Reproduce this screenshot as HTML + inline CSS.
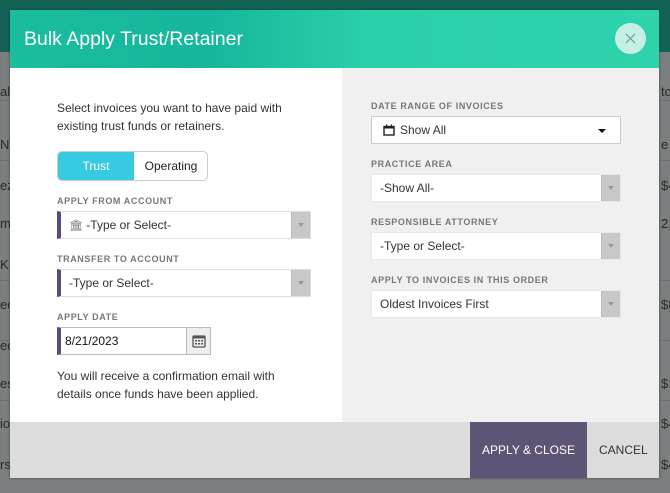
<!DOCTYPE html>
<html><head><style>
*{box-sizing:border-box;margin:0;padding:0}
body{width:670px;height:493px;overflow:hidden;background:#7b7e7f;font-family:"Liberation Sans",sans-serif;position:relative}
.bgtop{position:absolute;left:0;top:0;width:670px;height:52px;background:#136355}
.bgrow{position:absolute;left:0;width:670px;height:1px;background:#6d7071}
.bgt{position:absolute;font-size:13px;color:#2a2a2a}
.modal{position:absolute;left:10px;top:10px;width:649px;height:468px;background:#fff;overflow:hidden;box-shadow:0 0 3px rgba(0,0,0,.4)}
.hdr{position:absolute;left:0;top:0;width:649px;height:58px;background:linear-gradient(90deg,#1bbd9e 0%,#15b69c 30%,#2ad0a8 55%,#2ed3ab 100%)}
.hdr h1{position:absolute;left:14px;top:18px;font-weight:normal;font-size:19.5px;color:#fff}
.close{position:absolute;left:605px;top:13px;width:31px;height:31px;border-radius:50%;background:#c4efe2}
.right{position:absolute;left:332px;top:58px;width:317px;height:354px;background:#f0f0f0}
.footer{position:absolute;left:0;top:412px;width:649px;height:56px;background:#dcdcdc}
.apply{position:absolute;left:460px;top:0;width:117px;height:56px;background:#5e5475;color:#fff;font-size:12px;text-align:center;line-height:57px}
.cancel{position:absolute;left:589px;top:0;font-size:12px;color:#333;line-height:57px}
.txt{position:absolute;font-size:12px;color:#333;line-height:18px}
.lbl{position:absolute;font-size:9px;font-weight:bold;letter-spacing:0.6px;color:#777}
.sel{position:absolute;height:28px;background:#fff;border:1px solid #ddd;font-size:12px;color:#333;line-height:26px;padding-left:8px}
.sel.bar{border-left:4px solid #5a4a7d}
.arr{position:absolute;right:0;top:0;width:19px;height:26px;background:#c8c8c8;border-left:1px solid #bbb}
.arr:after{content:"";position:absolute;left:6px;top:11px;border:3.5px solid transparent;border-top:4px solid #999}
</style></head><body>
<div class="bgtop"></div>
<div class="bgrow" style="top:100px"></div><div class="bgrow" style="top:160px"></div><div class="bgrow" style="top:220px"></div><div class="bgrow" style="top:280px"></div><div class="bgrow" style="top:340px"></div><div class="bgrow" style="top:400px"></div>
<div class="bgt" style="left:0;top:84px">al</div><div class="bgt" style="left:0;top:137px">Na</div><div class="bgt" style="left:0;top:178px">ez</div><div class="bgt" style="left:0;top:216px">m</div><div class="bgt" style="left:0;top:257px">K</div><div class="bgt" style="left:0;top:297px">ec</div><div class="bgt" style="left:0;top:338px">ec</div><div class="bgt" style="left:0;top:376px">es</div><div class="bgt" style="left:0;top:416px">io</div><div class="bgt" style="left:0;top:457px">rs</div>
<div class="bgt" style="left:661px;top:84px">tc</div><div class="bgt" style="left:661px;top:137px">e</div><div class="bgt" style="left:661px;top:178px">$4</div><div class="bgt" style="left:661px;top:216px">2,</div><div class="bgt" style="left:661px;top:297px">$8</div><div class="bgt" style="left:661px;top:376px">$1</div><div class="bgt" style="left:661px;top:416px">$4</div><div class="bgt" style="left:661px;top:457px">$4</div>
<div class="modal">
 <div class="hdr"><h1>Bulk Apply Trust/Retainer</h1><div class="close"><svg width="31" height="31" viewBox="0 0 31 31"><path d="M11 11L20 20M20 11L11 20" stroke="#6a9c90" stroke-width="1.1"/></svg></div></div>
 <div class="right"></div>
 <div class="txt" style="left:47px;top:89px">Select invoices you want to have paid with<br>existing trust funds or retainers.</div>
 <div style="position:absolute;left:47px;top:141px;width:151px;height:30px;border:1px solid #ccc;border-radius:5px;overflow:hidden;font-size:12px">
  <div style="position:absolute;left:0;top:0;width:76px;height:28px;background:#36cbe3;color:#fff;text-align:center;line-height:28px">Trust</div>
  <div style="position:absolute;left:76px;top:0;width:74px;height:28px;color:#222;text-align:center;line-height:28px">Operating</div>
 </div>
 <div class="lbl" style="left:47px;top:186px">APPLY FROM ACCOUNT</div>
 <div class="sel bar" style="left:47px;top:201px;width:254px"><span style="color:#777;font-size:11px">🏛</span> -Type or Select-<div class="arr"></div></div>
 <div class="lbl" style="left:47px;top:244px">TRANSFER TO ACCOUNT</div>
 <div class="sel bar" style="left:47px;top:259px;width:254px">-Type or Select-<div class="arr"></div></div>
 <div class="lbl" style="left:47px;top:302px">APPLY DATE</div>
 <div class="sel bar" style="left:47px;top:317px;width:154px;border-color:#bbb;border-left-color:#5a4a7d;padding-left:4px;color:#111">8/21/2023
  <div style="position:absolute;right:0;top:0;width:24px;height:26px;background:#eee;border-left:1px solid #bbb">
   <svg width="14" height="14" viewBox="0 0 14 14" style="position:absolute;left:5px;top:6px"><rect x="1" y="2" width="12" height="11" rx="1" fill="none" stroke="#555" stroke-width="1.3"/><rect x="1" y="2" width="12" height="2.5" fill="#555"/><g fill="#555"><rect x="3" y="6" width="2" height="1.5"/><rect x="6" y="6" width="2" height="1.5"/><rect x="9" y="6" width="2" height="1.5"/><rect x="3" y="9" width="2" height="1.5"/><rect x="6" y="9" width="2" height="1.5"/><rect x="9" y="9" width="2" height="1.5"/></g></svg>
  </div></div>
 <div class="txt" style="left:47px;top:357px">You will receive a confirmation email with<br>details once funds have been applied.</div>

 <div class="lbl" style="left:361px;top:91px">DATE RANGE OF INVOICES</div>
 <div class="sel" style="left:361px;top:106px;width:250px;border-color:#ccc">
  <svg width="12" height="12" viewBox="0 0 12 12" style="position:absolute;left:11px;top:7px"><rect x="1" y="2.5" width="10" height="8.5" fill="none" stroke="#222" stroke-width="1.4"/><rect x="1" y="2.5" width="10" height="2" fill="#222"/><rect x="3" y="0.5" width="1.3" height="3" fill="#222"/><rect x="7.7" y="0.5" width="1.3" height="3" fill="#222"/></svg>
  <span style="margin-left:20px">Show All</span>
  <div style="position:absolute;right:14px;top:12px;border:4px solid transparent;border-top:4px solid #111"></div></div>
 <div class="lbl" style="left:361px;top:149px">PRACTICE AREA</div>
 <div class="sel" style="left:361px;top:164px;width:250px;border-color:#e8e8e8">-Show All-<div class="arr"></div></div>
 <div class="lbl" style="left:361px;top:207px">RESPONSIBLE ATTORNEY</div>
 <div class="sel" style="left:361px;top:222px;width:250px;border-color:#e8e8e8">-Type or Select-<div class="arr"></div></div>
 <div class="lbl" style="left:361px;top:265px">APPLY TO INVOICES IN THIS ORDER</div>
 <div class="sel" style="left:361px;top:280px;width:250px;border-color:#e8e8e8">Oldest Invoices First<div class="arr"></div></div>

 <div class="footer"><div class="apply">APPLY &amp; CLOSE</div><div class="cancel">CANCEL</div></div>
</div>
</body></html>
